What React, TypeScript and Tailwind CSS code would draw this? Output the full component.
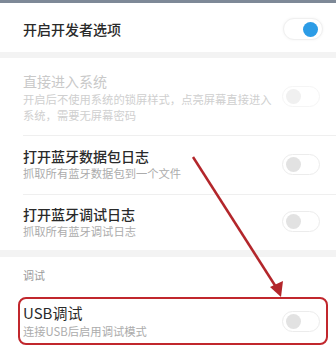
import React from "react";

type Row = {
	title: string;
	sub?: string[];
	disabled?: boolean;
};

function Toggle({ on, faint }: { on?: boolean; faint?: boolean }) {
	if (on) {
		return (
			<div className="flex h-[22px] w-[40px] items-center justify-end rounded-full border border-[#f0f0f0] bg-white pr-[4px] shadow-[0_0_3px_rgba(0,0,0,0.05)]">
				<div className="h-[15px] w-[15px] rounded-full bg-[#2c9ce6]" />
			</div>
		);
	}
	return (
		<div
			className={`flex h-[21px] w-[38px] items-center rounded-full border bg-white pl-[3px] ${
				faint ? "border-[#f5f5f5]" : "border-[#ececec]"
			}`}
		>
			<div
				className={`h-[15px] w-[15px] rounded-full ${
					faint ? "bg-[#f0f0f0]" : "bg-[#e2e2e2]"
				}`}
			/>
		</div>
	);
}

function SettingRow({ title, sub, disabled }: Row) {
	return (
		<div className="flex items-center justify-between pr-[16px]">
			<div className="flex flex-col">
				<span
					className={`text-[14px] ${
						disabled ? "leading-[20px] text-[#c9c9c9]" : "leading-[18px] font-medium text-[#2a2a2a]"
					}`}
				>
					{title}
				</span>
				{sub?.map((line) => (
					<span
						key={line}
						className={`text-[11.3px] leading-[16px] ${
							disabled ? "text-[#cfcfcf]" : "text-[#acacac]"
						}`}
					>
						{line}
					</span>
				))}
			</div>
			<Toggle faint={disabled} />
		</div>
	);
}

export default function App() {
	return (
		<div
			className="relative h-[352px] w-[336px] overflow-hidden bg-white"
			style={{ fontFamily: '"Noto Sans CJK SC", "Noto Sans", sans-serif' }}
		>
			<div className="h-[3px] bg-[#7e8997]" />

			<div className="flex h-[49px] items-center justify-between pl-[23px] pr-[13px] pt-[3px]">
				<span className="text-[14px] font-medium text-[#2a2a2a]">开启开发者选项</span>
				<Toggle on />
			</div>

			<div className="h-[6px] bg-[#f3f3f3]" />

			<div className="pl-[23px]">
				<div className="flex h-[77px] flex-col justify-center">
					<SettingRow
						title="直接进入系统"
						sub={["开启后不使用系统的锁屏样式，点亮屏幕直接进入", "系统，需要无屏幕密码"]}
						disabled
					/>
				</div>
				<div className="h-px bg-[#efefef]" />
				<div className="flex h-[58px] flex-col justify-center pb-[2px]">
					<SettingRow title="打开蓝牙数据包日志" sub={["抓取所有蓝牙数据包到一个文件"]} />
				</div>
				<div className="h-px bg-[#efefef]" />
				<div className="flex h-[55px] flex-col justify-center pb-[2px]">
					<SettingRow title="打开蓝牙调试日志" sub={["抓取所有蓝牙调试日志"]} />
				</div>
			</div>

			<div className="h-[7px] bg-[#f3f3f3]" />

			<div className="flex h-[40px] items-center pl-[23px] pb-[4px] text-[11px] text-[#9c9c9c]">
				调试
			</div>

			<div className="ml-[18px] w-[310px] rounded-[8px] border-[2.5px] border-[#c1272d] py-[4px] pl-[3px]">
				<div className="flex items-center justify-between pr-[6px]">
					<div className="flex flex-col">
						<span className="text-[15px] leading-[20px] text-[#2a2a2a]">USB调试</span>
						<span className="text-[11.3px] leading-[16px] text-[#acacac]">连接USB后启用调试模式</span>
					</div>
					<Toggle />
				</div>
			</div>

			<svg
				className="pointer-events-none absolute left-0 top-0"
				width="336"
				height="352"
				viewBox="0 0 336 352"
			>
				<line x1="193" y1="157" x2="276" y2="287" stroke="#b3262b" strokeWidth="2.5" />
				<polygon points="281,297 270,287 283,281" fill="#b3262b" />
			</svg>
		</div>
	);
}
